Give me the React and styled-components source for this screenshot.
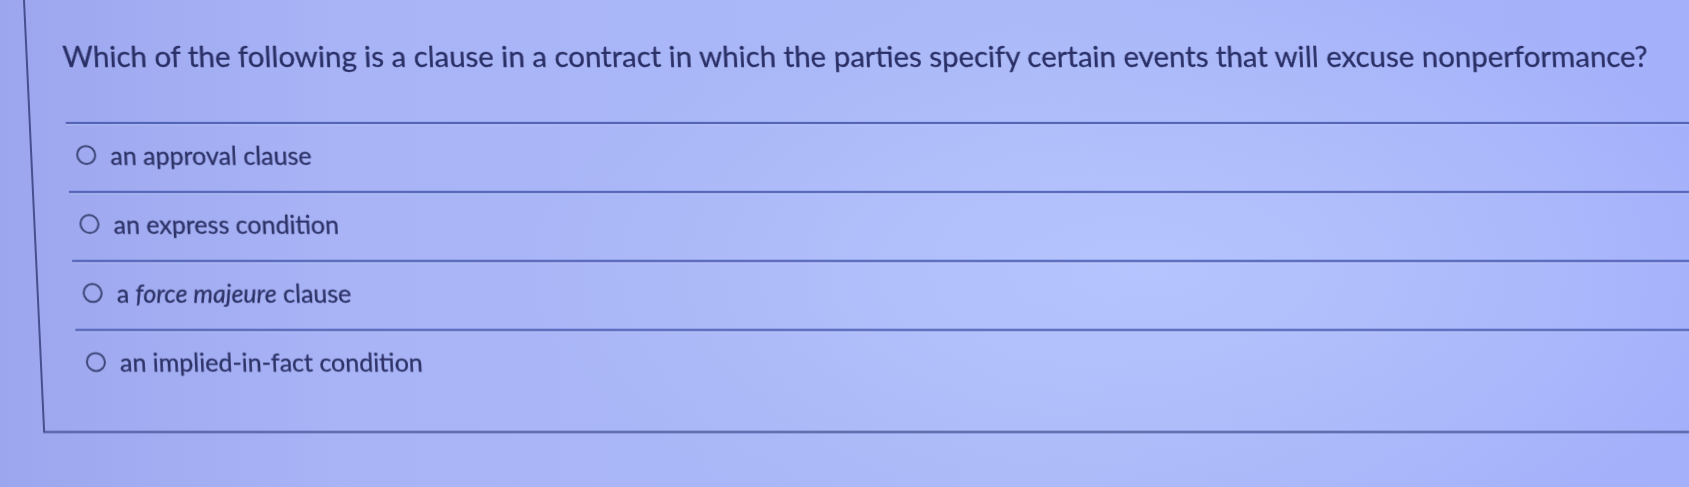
import React from 'react';
import styled, { createGlobalStyle } from 'styled-components';

const FONT_FAMILY = `Lato, "Open Sans", "Liberation Sans", sans-serif`;

const GlobalStyle = createGlobalStyle`
    html, body {
        margin: 0;
        padding: 0;
        background: #a7b3f4;
    }
`;

const Screen = styled.div`
    width: 1689px;
    height: 487px;
    overflow: hidden;
    background:
        radial-gradient(ellipse 900px 420px at 1150px 270px, rgba(186, 202, 255, 0.7), rgba(186, 202, 255, 0) 70%),
        linear-gradient(90deg, #9ca6ee 0%, #a8b4f6 20%, #aab8f8 60%, #a4b0fa 100%);
`;

const Card = styled.div`
    width: 1720px;
    margin-left: 23px;
    height: 433px;
    box-sizing: border-box;
    border-left: 2px solid #46508e;
    border-bottom: 2px solid #4a5699;
    padding: 39px 0 0 35px;
    transform-origin: 0 0;
    transform: skewX(2.67deg);
    display: flex;
    flex-direction: column;
    filter: blur(0.3px);
`;

const Question = styled.div`
    font-family: ${FONT_FAMILY};
    font-size: 29.4px;
    line-height: 34px;
    color: #2a2f66;
    margin-bottom: 49px;
    white-space: nowrap;
    -webkit-text-stroke: 0.3px #2a2f66;
`;

const Options = styled.div`
    display: flex;
    flex-direction: column;
`;

const Option = styled.label`
    display: flex;
    align-items: center;
    gap: 14px;
    height: 69px;
    box-sizing: border-box;
    padding: 0 0 6px 9px;
    border-top: 2px solid #4859b0;
    box-shadow: inset 0 1px 0 rgba(210, 220, 255, 0.6);
`;

const Radio = styled.span`
    display: block;
    width: 20px;
    height: 20px;
    box-sizing: border-box;
    border-radius: 50%;
    border: 2.5px solid #3d4677;
    flex-shrink: 0;
`;

const Label = styled.span`
    font-family: ${FONT_FAMILY};
    font-size: 25px;
    color: #2c3166;
    white-space: nowrap;
    -webkit-text-stroke: 0.3px #2c3166;

    em {
        font-style: italic;
    }
`;

const choices = [
    <>an approval clause</>,
    <>an express condition</>,
    <>a <em>force majeure</em> clause</>,
    <>an implied-in-fact condition</>,
];

const App = () => (
    <Screen>
        <GlobalStyle />
        <Card>
            <Question>
                Which of the following is a clause in a contract in which the parties specify certain events that will excuse nonperformance?
            </Question>
            <Options>
                {choices.map((c, i) => (
                    <Option key={i}>
                        <Radio />
                        <Label>{c}</Label>
                    </Option>
                ))}
            </Options>
        </Card>
    </Screen>
);

export default App;
